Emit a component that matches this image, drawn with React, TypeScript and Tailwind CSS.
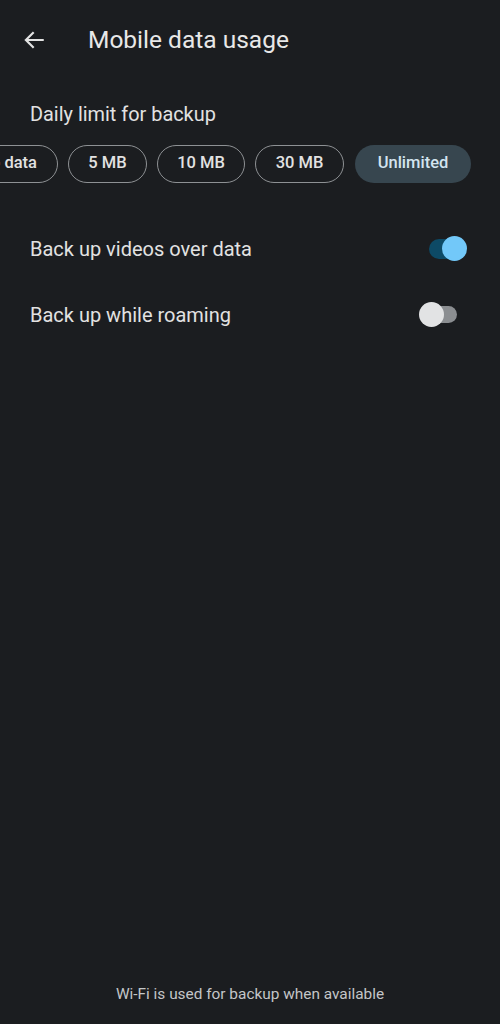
import React from "react";

function Chip({ label, w, selected = false, end = false }: { label: string; w: string; selected?: boolean; end?: boolean }) {
  const base = "shrink-0 h-[38px] rounded-full flex items-center text-[16.5px] font-medium ";
  const align = end ? "justify-end pr-[20px] " : "justify-center ";
  const look = selected
    ? "bg-[#37464f] text-[#d3e4ef]"
    : "border border-[#8e9194] text-[#e2e2e2]";
  return <div className={base + align + look + " " + w}>{label}</div>;
}

export default function App() {
  return (
    <div
      className="w-[500px] h-[1024px] bg-[#1b1d20] flex flex-col overflow-hidden text-[#e3e3e3]"
      style={{ fontFamily: "Roboto, 'Open Sans', sans-serif" }}
    >
      <div className="h-[80px] flex items-center">
        <div className="w-[88px] pl-[21px] flex items-center">
          <svg width="26" height="26" viewBox="0 0 24 24" fill="none">
            <path d="M20 12H5M11 5.5L4.5 12l6.5 6.5" stroke="#e3e3e3" strokeWidth="2" strokeLinecap="square" />
          </svg>
        </div>
        <div className="text-[24.5px] text-[#e8e8e8] leading-none">Mobile data usage</div>
      </div>
      <div className="pl-[30px] pt-[20px] text-[19.9px] text-[#e2e2e2]">Daily limit for backup</div>
      <div className="mt-[15px] flex gap-[10px] ml-[-52px]">
        <Chip label="No data" w="w-[110px]" end />
        <Chip label="5 MB" w="w-[79px]" />
        <Chip label="10 MB" w="w-[88px]" />
        <Chip label="30 MB" w="w-[89px]" />
        <Chip label="Unlimited" w="w-[116px] ml-[1px]" selected />
      </div>
      <div className="mt-[33px] flex items-center justify-between pl-[30px] pr-[33px] h-[66px]">
        <div className="text-[20px] text-[#e2e2e2]">Back up videos over data</div>
        <div className="relative w-[40px] h-[26px] flex items-center">
          <div className="absolute left-[2px] right-[8px] h-[20px] rounded-full bg-[#0d4a66]" />
          <div className="absolute right-0 w-[25px] h-[25px] rounded-full bg-[#72c8f9]" />
        </div>
      </div>
      <div className="flex items-center justify-between pl-[30px] pr-[43px] h-[66px]">
        <div className="text-[20px] text-[#e2e2e2]">Back up while roaming</div>
        <div className="relative w-[38px] h-[26px] flex items-center">
          <div className="absolute left-[8px] right-0 h-[17px] rounded-full bg-[#8b8e91]" />
          <div className="absolute left-0 w-[25px] h-[25px] rounded-full bg-[#e2e3e4]" />
        </div>
      </div>
      <div className="flex-1" />
      <div className="pb-[18px] text-center text-[15.4px] text-[#c4c6c8]">Wi-Fi is used for backup when available</div>
    </div>
  );
}
